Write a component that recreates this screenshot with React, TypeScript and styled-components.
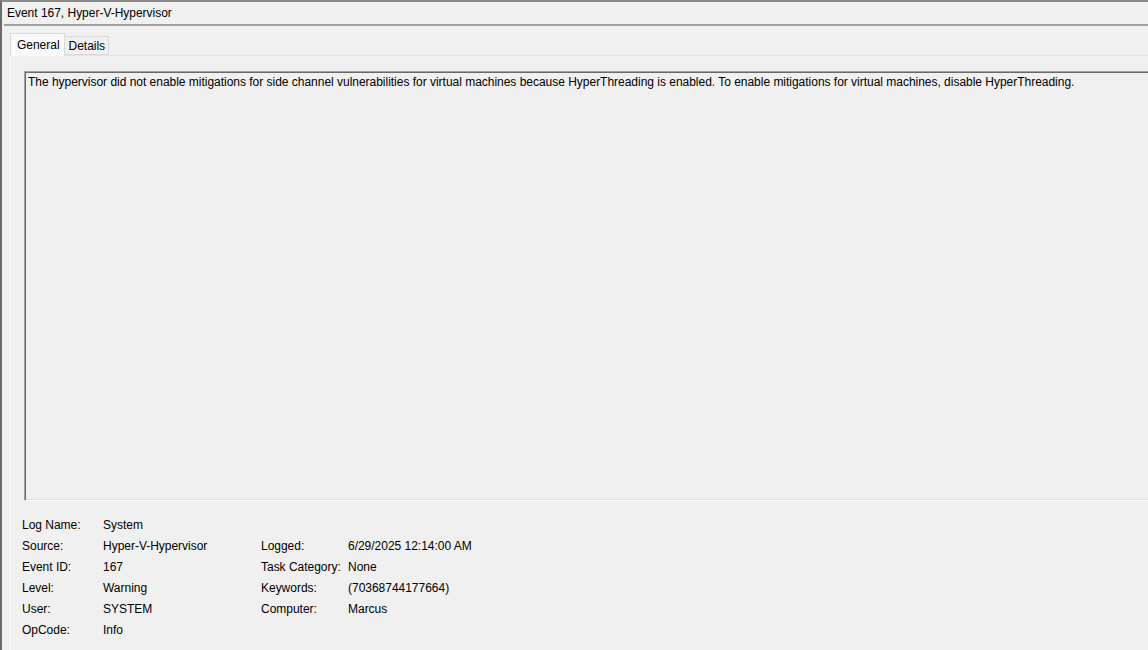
import React from "react";
import styled, { createGlobalStyle } from "styled-components";

const Global = createGlobalStyle`
  html, body { margin: 0; padding: 0; background: #f0f0f0; }
  body { font-family: "Liberation Sans", Arial, sans-serif; font-size: 12px; color: #000; overflow: hidden; letter-spacing: -0.02px; }
  #root { height: 650px; }
`;

const Window = styled.div`
  height: 650px;
  box-sizing: border-box;
  border-left: 2px solid #6b6b6b;
  border-top: 2px solid #8a8a8a;
  display: flex;
  flex-direction: column;
  overflow: hidden;
`;

const Header = styled.div`
  height: 22px;
  margin-left: 2px;
  padding-left: 3px;
  display: flex;
  align-items: center;
  border-bottom: 2px solid #a0a0a0;
  white-space: nowrap;
`;

const TabStrip = styled.div`
  display: flex;
  align-items: flex-end;
  padding-left: 8px;
  margin-top: 7px;
  height: 22px;
`;

const Tab = styled.div<{ $active?: boolean }>`
  box-sizing: border-box;
  height: ${(p) => (p.$active ? "23px" : "19px")};
  padding: ${(p) => (p.$active ? "0 4px 0 6px" : "0 3px 0 4px")};
  margin-bottom: ${(p) => (p.$active ? "-1px" : "0")};
  background: ${(p) => (p.$active ? "#f9f9f9" : "#f0f0f0")};
  border: 1px solid #d9d9d9;
  border-bottom: ${(p) => (p.$active ? "none" : "1px solid #d9d9d9")};
  border-left: ${(p) => (p.$active ? "1px solid #d9d9d9" : "none")};
  display: flex;
  align-items: center;
  position: relative;
  z-index: ${(p) => (p.$active ? 1 : 0)};
`;

const Panel = styled.div`
  flex: 1;
  margin-left: 8px;
  border-top: 1px solid #e3e3e3;
  border-left: 1px solid #fcfcfc;
  padding: 15px 0 0 13px;
  display: flex;
  flex-direction: column;
`;

const MessageBox = styled.div`
  height: 430px;
  width: 1200px;
  box-sizing: border-box;
  border-top: 1px solid #a0a0a0;
  border-left: 1px solid #a0a0a0;
  border-bottom: 1px solid #ffffff;
  box-shadow: inset 1px 1px 0 #696969, inset 0 -1px 0 #e3e3e3;
  padding: 3px 0 0 3px;
  white-space: nowrap;
`;

const Info = styled.div`
  display: grid;
  grid-template-columns: 81px 158px 87px auto;
  grid-auto-rows: 21px;
  align-items: center;
  margin-top: 13px;
  margin-left: -2px;
  white-space: nowrap;
`;

const Cell = styled.div``;

const rows: [string, string, string, string][] = [
  ["Log Name:", "System", "", ""],
  ["Source:", "Hyper-V-Hypervisor", "Logged:", "6/29/2025 12:14:00 AM"],
  ["Event ID:", "167", "Task Category:", "None"],
  ["Level:", "Warning", "Keywords:", "(70368744177664)"],
  ["User:", "SYSTEM", "Computer:", "Marcus"],
  ["OpCode:", "Info", "", ""],
];

export default function App() {
  return (
    <>
      <Global />
      <Window>
        <Header>Event 167, Hyper-V-Hypervisor</Header>
        <TabStrip>
          <Tab $active>General</Tab>
          <Tab>Details</Tab>
        </TabStrip>
        <Panel>
          <MessageBox>
            The hypervisor did not enable mitigations for side channel vulnerabilities for virtual machines because
            HyperThreading is enabled. To enable mitigations for virtual machines, disable HyperThreading.
          </MessageBox>
          <Info>
            {rows.map((r, i) =>
              r.map((c, j) => <Cell key={`${i}-${j}`}>{c}</Cell>)
            )}
          </Info>
        </Panel>
      </Window>
    </>
  );
}
